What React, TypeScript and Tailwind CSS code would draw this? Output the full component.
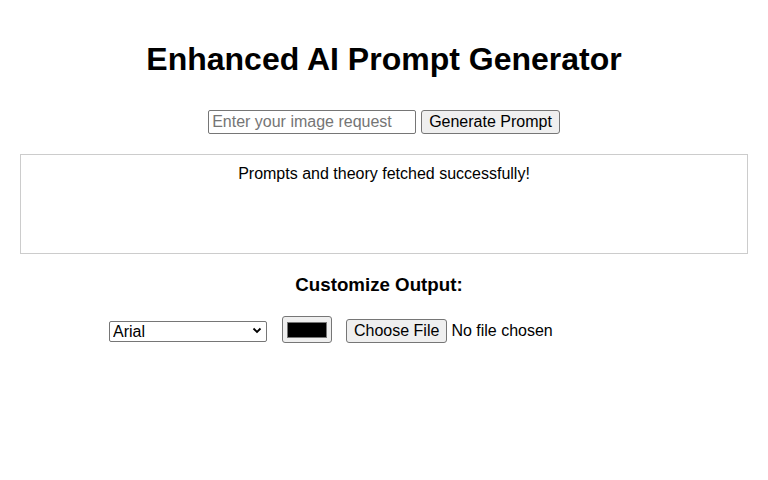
import { useState } from 'react'

export default function App() {
  const [request, setRequest] = useState('')
  const [font, setFont] = useState('Arial')

  return (
    <div className="min-h-[480px] w-[768px] bg-white px-5 text-black font-['Liberation_Sans',Arial,sans-serif]">
      {/* Title */}
      <h1 className="pt-[41px] text-center text-[32px] font-bold leading-[37px]">
        Enhanced AI Prompt Generator
      </h1>

      {/* Request row */}
      <div className="mt-[32px] flex h-6 items-center justify-center gap-[5px]">
        <input
          value={request}
          onChange={(e) => setRequest(e.target.value)}
          placeholder="Enter your image request"
          className="h-6 w-[208px] rounded-[2px] border border-[#767676] px-[3px] text-base leading-[20px] placeholder:text-[#757575]"
        />
        <button className="h-6 rounded-[3px] border border-[#767676] bg-[#efefef] px-[7px] text-base leading-[20px]">
          Generate Prompt
        </button>
      </div>

      {/* Output box */}
      <div className="mt-5 h-[100px] border border-[#cccccc] pt-[10px] text-center text-base leading-[18px]">
        Prompts and theory fetched successfully!
      </div>

      {/* Customize */}
      <h3 className="mt-[20px] pr-[10px] text-center text-[18.72px] font-bold leading-[22px]">Customize Output:</h3>

      <div className="mt-[19px] flex items-center pl-[89px]">
        <div className="relative mt-[5px]">
          <select
            value={font}
            onChange={(e) => setFont(e.target.value)}
            className="h-[21px] w-[158px] appearance-none rounded-[2px] border border-[#767676] bg-white pl-[3px] text-base leading-[19px]"
          >
            <option>Arial</option>
            <option>Times New Roman</option>
            <option>Courier New</option>
          </select>
          <svg
            className="pointer-events-none absolute right-[5px] top-[7px]"
            width="10"
            height="7"
            viewBox="0 0 10 7"
          >
            <path d="M1.5 1.5 L5 5 L8.5 1.5" fill="none" stroke="#000" strokeWidth="1.8" />
          </svg>
        </div>

        <div className="ml-[15px] flex h-[27px] w-[50px] items-center justify-center rounded-[3px] border border-[#767676] bg-[#efefef]">
          <div className="h-[16px] w-[40px] border border-[#777777] bg-black" />
        </div>

        <div className="ml-[14px] mt-[3px] flex items-center">
          <button className="h-6 rounded-[3px] border border-[#767676] bg-[#efefef] px-[7px] text-base leading-[20px]">
            Choose File
          </button>
          <span className="ml-[4px] text-base leading-[18px]">No file chosen</span>
        </div>
      </div>
    </div>
  )
}
